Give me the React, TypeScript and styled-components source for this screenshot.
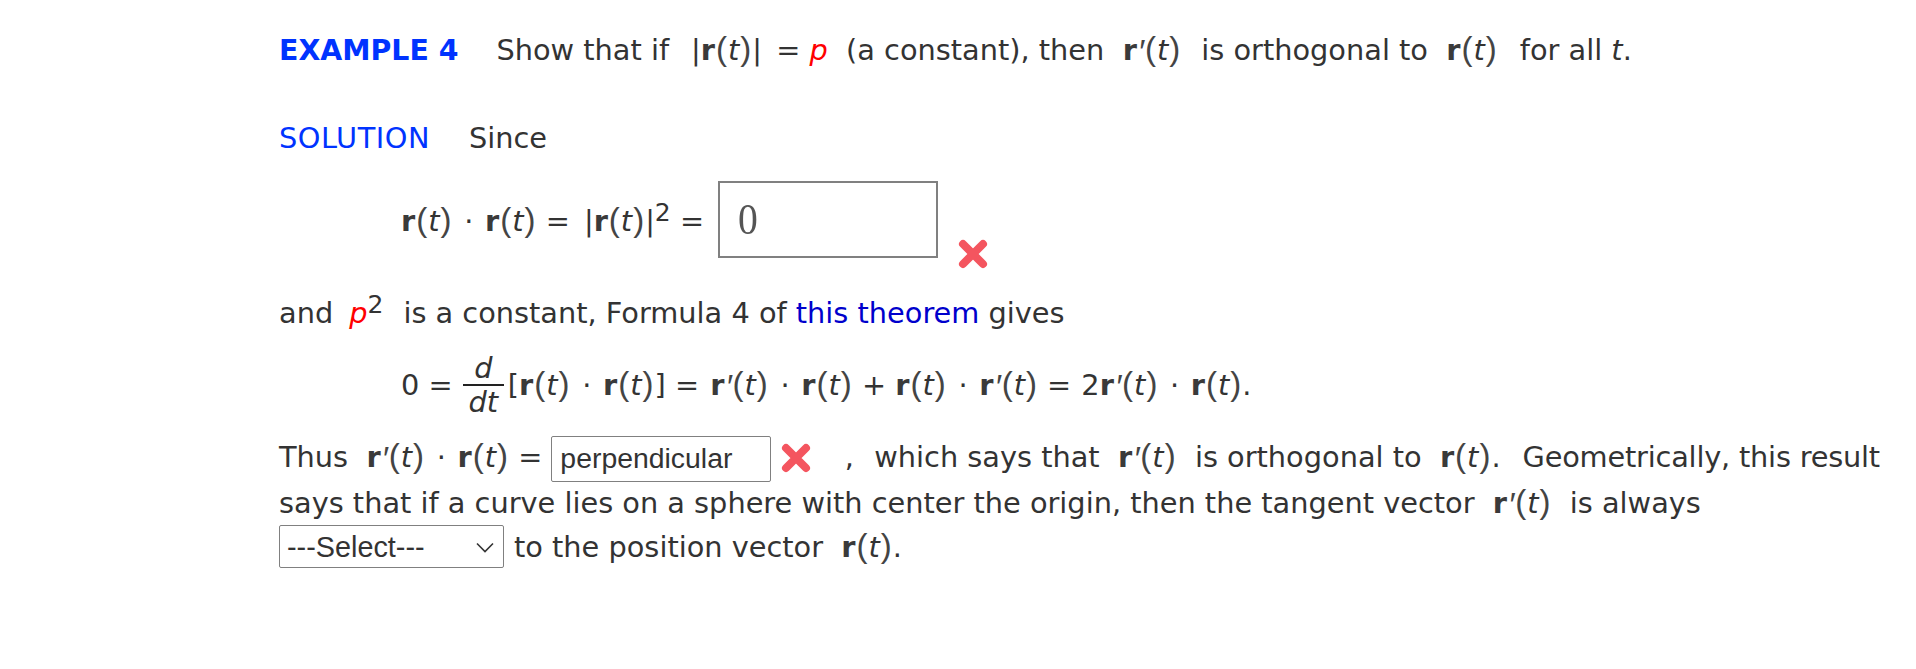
import React from "react";
import styled, { createGlobalStyle } from "styled-components";

const Global = createGlobalStyle`
  html, body { margin: 0; padding: 0; background: #fff; }
  body { font-family: "DejaVu Sans", Verdana, sans-serif; font-size: 28.8px; color: #333; }
`;

const Page = styled.div`
  height: 669px;
  overflow: hidden;
  box-sizing: border-box;
  padding: 30px 0 0 279px;
`;
const Line = styled.div<{ $top?: number; $indent?: number; $height?: number }>`
  display: flex;
  align-items: center;
  white-space: pre;
  height: ${(p) => p.$height ?? 40}px;
  margin-top: ${(p) => p.$top ?? 0}px;
  margin-left: ${(p) => p.$indent ?? 0}px;
`;
const Heading = styled.span<{ $bold?: boolean; $gap: number }>`
  color: #0033ff;
  font-size: ${(p) => (p.$bold ? 28.4 : 28.8)}px;
  font-weight: ${(p) => (p.$bold ? 700 : 400)};
  letter-spacing: ${(p) => (p.$bold ? 0 : 0.5)}px;
  margin-right: ${(p) => p.$gap}px;
`;
const B = styled.b`font-weight: 700; color: #3a3a3a;`;
const I = styled.i`font-style: italic;`;
const Red = styled.i`color: #f00; font-style: italic;`;
const Sup = styled.sup`
  font-size: 25px;
  line-height: 0;
  position: relative;
  top: -10px;
  vertical-align: baseline;
`;
const Link = styled.a`color: #0000cc; text-decoration: none;`;
const Text = styled.span<{ $lift?: number }>`
  margin-bottom: ${(p) => p.$lift ?? 0}px;
`;
const Tight = styled.span`letter-spacing: -0.2px;`;
const Gap = styled.span<{ $w: number }>`
  display: inline-block;
  width: ${(p) => p.$w}px;
`;
const Op = styled.span<{ $l?: number; $r?: number }>`
  margin-left: ${(p) => p.$l ?? 0}px;
  margin-right: ${(p) => p.$r ?? 0}px;
`;
const Paren = styled.span`
  font-family: "Liberation Sans", Arial, sans-serif;
  font-size: 33px;
  line-height: 0;
  color: #444;
  margin: 0 1px;
`;
const PrimeMark = styled.span`
  font-family: "Liberation Sans", Arial, sans-serif;
  font-style: italic;
  font-size: 33px;
  line-height: 0;
  color: #444;
  position: relative;
  top: 3px;
  margin-left: 1px;
`;

const MathBox = styled.div`
  box-sizing: border-box;
  width: 220px;
  height: 77px;
  border: 2px solid #808080;
  margin: -2px 0 0 14px;
  padding-left: 18px;
  display: flex;
  align-items: center;
  font-family: "Liberation Serif", serif;
  font-size: 44px;
  color: #555;
`;
const ZeroGlyph = styled.span`
  display: inline-block;
  transform: scaleX(0.9);
  transform-origin: left center;
`;
const Frac = styled.span`
  display: inline-flex;
  flex-direction: column;
  align-items: center;
  font-style: italic;
  line-height: 32px;
  width: 41px;
  margin: 0 4px 0 1px;
`;
const FracTop = styled.span`
  border-bottom: 2px solid #222;
  width: 100%;
  text-align: center;
`;
const TextInput = styled.div`
  box-sizing: border-box;
  width: 220px;
  height: 46px;
  border: 1px solid #808080;
  border-radius: 2px;
  margin-left: 9px;
  padding: 0 0 2px 8px;
  display: flex;
  align-items: center;
  font-family: "Liberation Sans", Arial, sans-serif;
  font-size: 28.4px;
  color: #333;
`;
const SelectBox = styled.div`
  box-sizing: border-box;
  width: 225px;
  height: 43px;
  border: 1px solid #808080;
  border-radius: 2px;
  margin-right: 10px;
  padding: 2px 8px 0 7px;
  display: flex;
  align-items: center;
  justify-content: space-between;
  font-family: "Liberation Sans", Arial, sans-serif;
  font-size: 28.8px;
  color: #333;
`;
const CrossWrap = styled.svg<{ $left: number; $top: number }>`
  flex: none;
  margin-left: ${(p) => p.$left}px;
  margin-top: ${(p) => p.$top}px;
  filter: blur(0.6px);
`;
const Cross = ({ left, top }: { left: number; top: number }) => (
  <CrossWrap $left={left} $top={top} width="30" height="30" viewBox="0 0 30 30">
    <path d="M5 5L25 25M25 5L5 25" stroke="#f4555f" strokeWidth="8" strokeLinecap="round" />
  </CrossWrap>
);

const RT = () => (<><B>r</B><Paren>(</Paren><I>t</I><Paren>)</Paren></>);
const RP = () => (<><B>r</B><PrimeMark>′</PrimeMark><Paren>(</Paren><I>t</I><Paren>)</Paren></>);
const Dot = () => <Op $l={2.5} $r={2.5}>·</Op>;

export default function App() {
  return (
    <>
      <Global />
      <Page>
        <Line>
          <Heading $bold $gap={38}>EXAMPLE 4</Heading>
          <Text>Show that if<Gap $w={22} />|<RT />| <Op $l={5}>=</Op> <Red>p</Red>  (a constant), then  <RP /><Gap $w={20} />is orthogonal to  <RT /><Gap $w={22} />for all <I>t</I>.</Text>
        </Line>
        <Line $top={48}>
          <Heading $gap={39}>SOLUTION</Heading>
          <Text>Since</Text>
        </Line>
        <Line $top={24} $indent={122} $height={77}>
          <Text><RT /> <Dot /> <RT /> <Op $r={5}>=</Op> |<RT />|<Sup>2</Sup> =</Text>
          <MathBox><ZeroGlyph>0</ZeroGlyph></MathBox>
          <Cross left={20} top={67} />
        </Line>
        <Line $top={34}>
          <Text>and<Gap $w={16} /><Red>p</Red><Sup>2</Sup><Gap $w={20} />is a constant, Formula 4 of <Link>this theorem</Link> gives</Text>
        </Line>
        <Line $top={21} $indent={122} $height={62}>
          <Text>0 = </Text>
          <Frac><FracTop>d</FracTop>dt</Frac>
          <Text>[<RT /> <Dot /> <RT />] <Op $r={2}>=</Op> <RP /> <Dot /> <RT /> + <RT /> <Dot /> <RP /> <Op $r={1}>=</Op> 2<RP /> <Dot /> <RT />.</Text>
        </Line>
        <Line $top={20} $height={46}>
          <Text $lift={5}>Thus  <RP /> <Dot /> <RT /> =</Text>
          <TextInput>perpendicular</TextInput>
          <Cross left={10} top={-2} />
          <Text $lift={5}>   <Op $l={6} $r={2}>,</Op>  which says that  <RP />  is orthogonal to  <RT />.<Gap $w={22} /><Tight>Geometrically, this result</Tight></Text>
        </Line>
        <Line $top={1}>
          <Text>says that if a curve lies on a sphere with center the origin, then the tangent vector  <RP />  is always</Text>
        </Line>
        <Line $top={2} $height={43}>
          <SelectBox>
            ---Select---
            <svg width="20" height="11" viewBox="0 0 20 11"><path d="M2 1.5L10 9.5L18 1.5" fill="none" stroke="#333" strokeWidth="1.6" /></svg>
          </SelectBox>
          <Text>to the position vector  <RT />.</Text>
        </Line>
      </Page>
    </>
  );
}
